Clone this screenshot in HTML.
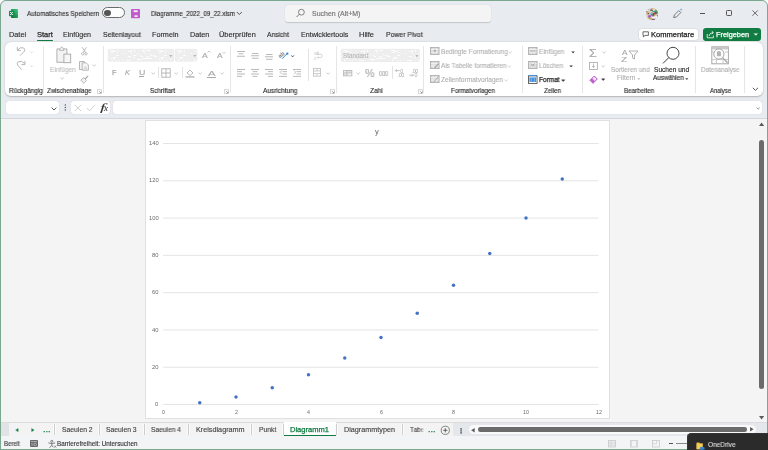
<!DOCTYPE html>
<html><head><meta charset="utf-8">
<style>
*{margin:0;padding:0;box-sizing:border-box}
html,body{width:768px;height:450px;overflow:hidden;background:#fff}
body{position:relative;font-family:"Liberation Sans",sans-serif;color:#242424}
.a{position:absolute}
.tx{white-space:nowrap;line-height:0;font-kerning:none;transform-origin:0 0;-webkit-text-stroke:0.12px currentColor;will-change:transform}
svg.a{overflow:visible}
</style></head><body>
<div class="a" style="left:0px;top:0px;width:768px;height:450px;background:#e8ebef"></div>
<svg class="a" style="left:9px;top:8.8px;" width="10" height="10" viewBox="0 0 10 10"><defs><linearGradient id="xg" x1="1" y1="0" x2="0" y2="1"><stop offset="0" stop-color="#3fd08a"/><stop offset="0.5" stop-color="#1f9a58"/><stop offset="1" stop-color="#0e6f3a"/></linearGradient></defs><rect x="2" y="0" width="7" height="9" rx="0.8" fill="url(#xg)"/><rect x="0" y="1.8" width="5" height="5.4" rx="0.6" fill="#178a4c"/><path d="M1.3 3 L3.7 6 M3.7 3 L1.3 6" stroke="#fff" stroke-width="0.95"/></svg>
<div class="a tx" style="left:26.69px;top:13.70px;font-size:7px;color:#2b2b2b;transform:scaleX(0.9087);">Automatisches Speichern</div>
<div class="a" style="left:102.3px;top:7.3px;width:22.4px;height:11px;border:0.8px solid #6a6a6a;border-radius:6px;background:#fdfdfd"></div>
<div class="a" style="left:104.4px;top:9.6px;width:6.8px;height:6.6px;border-radius:50%;background:#555"></div>
<svg class="a" style="left:131px;top:8.7px;" width="9" height="9.3" viewBox="0 0 9 9.3"><rect x="0" y="0" width="9" height="9.2" rx="0.8" fill="#c35ccb"/><rect x="2.6" y="1.3" width="4.1" height="1.8" fill="#fff" opacity=".9"/><rect x="3.5" y="6.3" width="3.1" height="1.7" fill="#fff" opacity=".9"/></svg>
<div class="a tx" style="left:150.89px;top:13.70px;font-size:7px;color:#2b2b2b;transform:scaleX(0.8802);">Diagramme_2022_09_22.xlsm</div>
<svg class="a" style="left:236px;top:11px;" width="7" height="5" viewBox="0 0 7 5"><path d="M0.8 1 L3.3 3.5 L5.8 1" fill="none" stroke="#444" stroke-width="0.9"/></svg>
<div class="a" style="left:285px;top:5px;width:206px;height:16.7px;background:#f5f4f5;border-radius:3px;box-shadow:0 0.5px 1px rgba(0,0,0,.16)"></div>
<svg class="a" style="left:295px;top:8px;" width="11" height="11" viewBox="0 0 11 11"><circle cx="6.4" cy="4.2" r="2.9" fill="none" stroke="#666" stroke-width="0.8"/><path d="M4.3 6.3 L1.6 9" stroke="#666" stroke-width="0.9"/></svg>
<div class="a tx" style="left:311.58px;top:13.70px;font-size:7px;color:#6e6e6e;">Suchen (Alt+M)</div>
<svg class="a" style="left:645px;top:6.5px;" width="14" height="14" viewBox="0 0 14 14"><defs><clipPath id="avc"><circle cx="7" cy="7.1" r="6.1"/></clipPath></defs><g clip-path="url(#avc)"><rect width="14" height="14" fill="#d8d2c8"/><rect x="5.9" y="7.3" width="2.9" height="1.7" fill="#d9c27a"/><rect x="11.1" y="2.5" width="2.6" height="1.7" fill="#7ac0d8"/><rect x="10.3" y="1.2" width="1.7" height="1.1" fill="#5a5a5a"/><rect x="11.6" y="8.2" width="2.3" height="1.6" fill="#6b4a2a"/><rect x="8.5" y="8.0" width="1.5" height="1.0" fill="#d9c27a"/><rect x="0.8" y="0.5" width="2.8" height="1.8" fill="#5a5a5a"/><rect x="6.0" y="5.7" width="2.7" height="1.7" fill="#b04a5a"/><rect x="3.8" y="0.1" width="1.4" height="1.9" fill="#e8e0d0"/><rect x="13.0" y="12.9" width="2.7" height="2.0" fill="#f2f2f2"/><rect x="9.9" y="6.7" width="1.3" height="1.8" fill="#c9a25a"/><rect x="5.2" y="11.0" width="1.9" height="2.3" fill="#e6e6f0"/><rect x="8.9" y="2.8" width="2.9" height="1.1" fill="#e8e0d0"/><rect x="12.7" y="5.2" width="1.3" height="1.9" fill="#5a5a5a"/><rect x="8.8" y="4.4" width="1.8" height="1.0" fill="#e8e0d0"/><rect x="9.9" y="1.5" width="1.6" height="1.1" fill="#8a6a3a"/><rect x="6.0" y="6.3" width="2.4" height="1.3" fill="#d9c27a"/><rect x="2.5" y="9.5" width="1.4" height="1.9" fill="#c9a25a"/><rect x="5.1" y="12.9" width="1.2" height="2.2" fill="#5a5a5a"/><rect x="7.7" y="13.0" width="1.2" height="1.3" fill="#e6e6f0"/><rect x="7.8" y="7.5" width="1.3" height="1.2" fill="#6b4a2a"/><rect x="3.4" y="10.0" width="1.8" height="1.4" fill="#c9a25a"/><rect x="1.0" y="2.7" width="2.3" height="1.0" fill="#f2f2f2"/><rect x="4.8" y="5.9" width="2.9" height="1.7" fill="#7ac0d8"/><rect x="1.8" y="5.0" width="2.3" height="1.4" fill="#9a4fc0"/><rect x="10.6" y="3.2" width="1.5" height="2.0" fill="#d9c27a"/><rect x="2.6" y="12.4" width="2.8" height="1.8" fill="#e8e0d0"/><rect x="0.6" y="1.4" width="2.1" height="1.4" fill="#ffffff"/><rect x="9.2" y="3.3" width="2.7" height="1.8" fill="#4f9a4a"/><rect x="6.8" y="12.1" width="3.0" height="1.2" fill="#6b4a2a"/><rect x="7.3" y="11.1" width="2.3" height="1.4" fill="#9a4fc0"/><rect x="9.7" y="0.9" width="1.9" height="1.3" fill="#8a6a3a"/><rect x="2.3" y="4.8" width="2.2" height="1.2" fill="#f2f2f2"/><rect x="1.8" y="5.9" width="1.8" height="2.0" fill="#d9c27a"/><rect x="7.6" y="1.8" width="1.3" height="1.0" fill="#f2f2f2"/><rect x="9.1" y="12.5" width="1.2" height="1.9" fill="#6b4a2a"/><rect x="0.9" y="4.0" width="1.4" height="1.1" fill="#6b4a2a"/><rect x="7.1" y="9.6" width="2.8" height="2.0" fill="#ffffff"/><rect x="1.7" y="12.5" width="1.8" height="1.1" fill="#6b4a2a"/><rect x="11.7" y="11.3" width="2.0" height="2.1" fill="#e6e6f0"/><rect x="6.5" y="0.2" width="2.4" height="1.5" fill="#8a6a3a"/><rect x="7.9" y="1.0" width="2.4" height="2.4" fill="#e8e0d0"/><rect x="9.5" y="5.0" width="2.5" height="1.8" fill="#6b4a2a"/><rect x="6.0" y="7.0" width="2.1" height="1.7" fill="#4f9a4a"/><rect x="7.8" y="6.3" width="1.6" height="2.0" fill="#6b4a2a"/><rect x="10.1" y="8.6" width="2.1" height="2.3" fill="#f2f2f2"/><rect x="3.9" y="8.8" width="1.6" height="1.2" fill="#f2f2f2"/><rect x="8.6" y="5.7" width="2.8" height="1.5" fill="#b04a5a"/><rect x="3.3" y="8.2" width="2.6" height="2.1" fill="#9a4fc0"/><rect x="11.4" y="5.0" width="2.2" height="1.4" fill="#3aa6a0"/><rect x="1.7" y="4.6" width="2.8" height="1.1" fill="#c9a25a"/><rect x="12.4" y="3.6" width="1.5" height="1.6" fill="#4f9a4a"/><rect x="12.0" y="10.8" width="1.9" height="1.7" fill="#b04a5a"/><rect x="4.1" y="10.9" width="3.0" height="1.6" fill="#c9a25a"/><rect x="10.8" y="3.6" width="2.3" height="1.9" fill="#4f9a4a"/><rect x="7.4" y="4.0" width="2.6" height="1.0" fill="#3aa6a0"/><rect x="5.3" y="2.5" width="2.6" height="1.4" fill="#5a5a5a"/><rect x="1.8" y="0.6" width="2.3" height="1.6" fill="#b04a5a"/><rect x="7.0" y="8.3" width="1.9" height="1.1" fill="#9a4fc0"/><rect x="2.6" y="6.2" width="1.5" height="1.0" fill="#6b4a2a"/><rect x="7.0" y="0.5" width="1.6" height="2.1" fill="#d9c27a"/></g></svg>
<svg class="a" style="left:672px;top:8px;" width="12" height="12" viewBox="0 0 12 12"><path d="M1.6 9.6 L2.4 7 L6.8 2.6 L8.8 4.6 L4.4 9 Z" fill="none" stroke="#555" stroke-width="0.75"/><path d="M9.2 0.6 V2.6 M8.2 1.6 H10.2" stroke="#4aa0e8" stroke-width="0.6"/></svg>
<div class="a" style="left:700.3px;top:12.6px;width:5.2px;height:0.8px;background:#555"></div>
<div class="a" style="left:725.8px;top:10.4px;width:5.9px;height:5.9px;border:0.8px solid #555;border-radius:1.3px"></div>
<svg class="a" style="left:751.5px;top:10.2px;" width="7" height="7" viewBox="0 0 7 7"><path d="M0.4 0.4 L5.8 5.8 M5.8 0.4 L0.4 5.8" stroke="#444" stroke-width="0.75"/></svg>
<div class="a tx" style="left:8.80px;top:35.20px;font-size:7px;color:#2b2b2b;transform:scaleX(1.0461);">Datei</div>
<div class="a tx" style="left:36.56px;top:35.20px;font-size:7px;color:#2b2b2b;-webkit-text-stroke:0.25px currentColor;transform:scaleX(1.0754);">Start</div>
<div class="a tx" style="left:62.82px;top:35.20px;font-size:7px;color:#2b2b2b;transform:scaleX(1.0148);">Einfügen</div>
<div class="a tx" style="left:102.59px;top:35.20px;font-size:7px;color:#2b2b2b;transform:scaleX(0.9828);">Seitenlayout</div>
<div class="a tx" style="left:152.31px;top:35.20px;font-size:7px;color:#2b2b2b;transform:scaleX(1.0348);">Formeln</div>
<div class="a tx" style="left:189.56px;top:35.20px;font-size:7px;color:#2b2b2b;transform:scaleX(1.0340);">Daten</div>
<div class="a tx" style="left:219.13px;top:35.20px;font-size:7px;color:#2b2b2b;transform:scaleX(1.0492);">Überprüfen</div>
<div class="a tx" style="left:267.39px;top:35.20px;font-size:7px;color:#2b2b2b;transform:scaleX(0.9611);">Ansicht</div>
<div class="a tx" style="left:301.32px;top:35.20px;font-size:7px;color:#2b2b2b;transform:scaleX(1.0141);">Entwicklertools</div>
<div class="a tx" style="left:359.29px;top:35.20px;font-size:7px;color:#2b2b2b;transform:scaleX(1.0672);">Hilfe</div>
<div class="a tx" style="left:385.84px;top:35.20px;font-size:7px;color:#2b2b2b;transform:scaleX(0.9803);">Power Pivot</div>
<div class="a" style="left:37px;top:39.6px;width:16px;height:1.6px;background:#107c41;border-radius:1px"></div>
<div class="a" style="left:638.8px;top:28.6px;width:59.6px;height:11.8px;background:#fff;border-radius:3px;box-shadow:0 0 0 0.6px #d6d6d6"></div>
<svg class="a" style="left:642px;top:31px;" width="8" height="7" viewBox="0 0 8 7"><path d="M1 0.8 H6.4 V4.4 H3 L1.4 5.9 V4.4 H1 Z" fill="none" stroke="#444" stroke-width="0.8"/></svg>
<div class="a tx" style="left:651.08px;top:35.10px;font-size:7px;color:#242424;-webkit-text-stroke:0.25px currentColor;transform:scaleX(1.0794);">Kommentare</div>
<div class="a" style="left:703px;top:27.8px;width:58px;height:13px;background:#107c41;border-radius:3px"></div>
<svg class="a" style="left:706px;top:30px;" width="9" height="9" viewBox="0 0 9 9"><path d="M1.2 4 V7.8 H7.4 V5.5" fill="none" stroke="#fff" stroke-width="0.8"/><path d="M3 6 Q3.5 3 7 2.6 M5.8 1.2 L7.4 2.6 L5.8 4" fill="none" stroke="#fff" stroke-width="0.8"/></svg>
<div class="a tx" style="left:715.80px;top:35.30px;font-size:7px;color:#fff;-webkit-text-stroke:0.25px currentColor;transform:scaleX(1.0495);">Freigeben</div>
<svg class="a" style="left:753px;top:32px;" width="6" height="5" viewBox="0 0 6 5"><path d="M1 1.5 L2.8 3.3 L4.6 1.5" fill="#fff" stroke="#fff" stroke-width="0.6"/></svg>
<div class="a" style="left:5px;top:42.3px;width:758px;height:53.8px;background:#fff;border-radius:6px;box-shadow:0 0.8px 1.6px rgba(0,0,0,.24)"></div>
<div class="a" style="left:43.2px;top:45.5px;width:0.7px;height:47px;background:#e6e6e6"></div>
<div class="a" style="left:103px;top:45.5px;width:0.7px;height:47px;background:#e6e6e6"></div>
<div class="a" style="left:230.3px;top:45.5px;width:0.7px;height:47px;background:#e6e6e6"></div>
<div class="a" style="left:336.2px;top:45.5px;width:0.7px;height:47px;background:#e6e6e6"></div>
<div class="a" style="left:423.4px;top:45.5px;width:0.7px;height:47px;background:#e6e6e6"></div>
<div class="a" style="left:521.5px;top:45.5px;width:0.7px;height:47px;background:#e6e6e6"></div>
<div class="a" style="left:582.3px;top:45.5px;width:0.7px;height:47px;background:#e6e6e6"></div>
<div class="a" style="left:695.3px;top:45.5px;width:0.7px;height:47px;background:#e6e6e6"></div>
<div class="a" style="left:744px;top:45.5px;width:0.7px;height:47px;background:#e6e6e6"></div>
<div class="a" style="left:158px;top:67px;width:0.7px;height:11px;background:#e3e3e3"></div>
<div class="a" style="left:181.5px;top:67px;width:0.7px;height:11px;background:#e3e3e3"></div>
<div class="a" style="left:307.5px;top:48.6px;width:0.7px;height:32.800000000000004px;background:#e3e3e3"></div>
<div class="a" style="left:391.5px;top:66.4px;width:0.7px;height:12.599999999999994px;background:#e3e3e3"></div>
<div class="a tx" style="left:8.94px;top:90.90px;font-size:6.8px;color:#242424;transform:scaleX(0.9431);">Rückgängig</div>
<div class="a tx" style="left:47.20px;top:90.90px;font-size:6.8px;color:#242424;transform:scaleX(0.9049);">Zwischenablage</div>
<div class="a tx" style="left:150.21px;top:91.00px;font-size:6.8px;color:#242424;transform:scaleX(0.9237);">Schriftart</div>
<div class="a tx" style="left:262.69px;top:91.00px;font-size:6.8px;color:#242424;transform:scaleX(0.9575);">Ausrichtung</div>
<div class="a tx" style="left:370.19px;top:91.00px;font-size:6.8px;color:#242424;transform:scaleX(0.9556);">Zahl</div>
<div class="a tx" style="left:450.88px;top:91.00px;font-size:6.8px;color:#242424;transform:scaleX(0.9245);">Formatvorlagen</div>
<div class="a tx" style="left:543.70px;top:91.00px;font-size:6.8px;color:#242424;transform:scaleX(0.9181);">Zellen</div>
<div class="a tx" style="left:623.64px;top:90.80px;font-size:6.8px;color:#242424;transform:scaleX(0.9203);">Bearbeiten</div>
<div class="a tx" style="left:709.79px;top:90.60px;font-size:6.8px;color:#242424;transform:scaleX(0.8712);">Analyse</div>
<svg class="a" style="left:96.5px;top:89px;" width="5" height="5" viewBox="0 0 5 5"><path d="M0.5 0.5 H4.5 V4.5 H0.5 Z" fill="none" stroke="#bcbcbc" stroke-width="0.6"/><path d="M1.8 1.8 L4 4 M4 2.6 V4 H2.6" fill="none" stroke="#8a8a8a" stroke-width="0.6"/></svg>
<svg class="a" style="left:224px;top:89px;" width="5" height="5" viewBox="0 0 5 5"><path d="M0.5 0.5 H4.5 V4.5 H0.5 Z" fill="none" stroke="#bcbcbc" stroke-width="0.6"/><path d="M1.8 1.8 L4 4 M4 2.6 V4 H2.6" fill="none" stroke="#8a8a8a" stroke-width="0.6"/></svg>
<svg class="a" style="left:330px;top:89px;" width="5" height="5" viewBox="0 0 5 5"><path d="M0.5 0.5 H4.5 V4.5 H0.5 Z" fill="none" stroke="#bcbcbc" stroke-width="0.6"/><path d="M1.8 1.8 L4 4 M4 2.6 V4 H2.6" fill="none" stroke="#8a8a8a" stroke-width="0.6"/></svg>
<svg class="a" style="left:417.5px;top:89px;" width="5" height="5" viewBox="0 0 5 5"><path d="M0.5 0.5 H4.5 V4.5 H0.5 Z" fill="none" stroke="#bcbcbc" stroke-width="0.6"/><path d="M1.8 1.8 L4 4 M4 2.6 V4 H2.6" fill="none" stroke="#8a8a8a" stroke-width="0.6"/></svg>
<svg class="a" style="left:752px;top:87px;" width="7" height="5" viewBox="0 0 7 5"><path d="M0.8 0.8 L3.4 3.4 L6 0.8" fill="none" stroke="#444" stroke-width="0.9"/></svg>
<svg class="a" style="left:16px;top:46px;" width="10" height="11" viewBox="0 0 10 11"><path d="M1.3 0.9 V4.4 H4.8" fill="none" stroke="#a8a8a8" stroke-width="0.85"/><path d="M1.6 4.1 Q4.5 0.3 7.8 2 Q9.6 3.3 8.3 5.3 L4 9.6" fill="none" stroke="#a8a8a8" stroke-width="0.85"/></svg>
<svg class="a" style="left:29.8px;top:50.5px;" width="4" height="3" viewBox="0 0 4 3"><path d="M0.4 0.6 L1.6 1.8 L2.8 0.6" fill="none" stroke="#bdbdbd" stroke-width="0.6"/></svg>
<svg class="a" style="left:16px;top:60px;" width="10" height="11" viewBox="0 0 10 11"><path d="M8.9 0.9 V4.6 H5.4" fill="none" stroke="#a8a8a8" stroke-width="0.85"/><path d="M8.6 3.6 Q5.5 0 2.2 1.8 Q0.4 3.2 1.8 5.3 L5.8 9.6" fill="none" stroke="#a8a8a8" stroke-width="0.85"/></svg>
<svg class="a" style="left:29.8px;top:64.5px;" width="4" height="3" viewBox="0 0 4 3"><path d="M0.4 0.6 L1.6 1.8 L2.8 0.6" fill="none" stroke="#bdbdbd" stroke-width="0.6"/></svg>
<svg class="a" style="left:55px;top:46px;" width="17" height="18" viewBox="0 0 17 18"><path d="M1.9 2.9 H4.6 L6.7 1 L8.8 2.9 H11.9 V16.3 H1.9 Z" fill="#f3f3f3" stroke="#a8a8a8" stroke-width="0.9" stroke-linejoin="round"/><path d="M4.6 2.9 V4.4 H8.8 V2.9" fill="none" stroke="#a8a8a8" stroke-width="0.8"/><rect x="8.9" y="8.1" width="6.8" height="8.6" fill="#f6f6f6" stroke="#a8a8a8" stroke-width="0.9"/></svg>
<div class="a tx" style="left:49.66px;top:70.40px;font-size:6.8px;color:#b8b8b8;transform:scaleX(0.9634);-webkit-text-stroke:0.05px #b8b8b8">Einfügen</div>
<svg class="a" style="left:59.5px;top:76.8px;" width="5" height="3.5" viewBox="0 0 5 3.5"><path d="M0.6 0.6 L2.2 2.2 L3.8 0.6" fill="none" stroke="#b0b0b0" stroke-width="0.7"/></svg>
<svg class="a" style="left:80.5px;top:47px;" width="7" height="9" viewBox="0 0 7 9"><path d="M1.3 0.3 L4.6 5.6 M5.4 0.3 L2.1 5.6" stroke="#a8a8a8" stroke-width="0.8"/><circle cx="1.7" cy="6.8" r="1.2" fill="none" stroke="#a8a8a8" stroke-width="0.7"/><circle cx="5" cy="6.8" r="1.2" fill="none" stroke="#a8a8a8" stroke-width="0.7"/></svg>
<svg class="a" style="left:79px;top:60.5px;" width="11" height="10" viewBox="0 0 11 10"><rect x="0.6" y="0.6" width="4.6" height="8" fill="#f3f3f3" stroke="#a8a8a8" stroke-width="0.8"/><path d="M3.2 1.8 H7.2 L9.4 4 V9.2 H3.2 Z" fill="#f6f6f6" stroke="#a8a8a8" stroke-width="0.8"/><path d="M5 6 H7.8 M5 7.6 H7.8" stroke="#a8a8a8" stroke-width="0.5"/></svg>
<svg class="a" style="left:92.2px;top:64.3px;" width="5" height="3.5" viewBox="0 0 5 3.5"><path d="M0.6 0.6 L2.2 2.2 L3.8 0.6" fill="none" stroke="#b0b0b0" stroke-width="0.7"/></svg>
<svg class="a" style="left:80px;top:74.5px;" width="9" height="9" viewBox="0 0 9 9"><path d="M0.8 5 L3.8 2.6 L6.4 5.6 L3.6 8.2 Z" fill="#f3f3f3" stroke="#a8a8a8" stroke-width="0.8" stroke-linejoin="round"/><path d="M5 4 L8.2 0.8" stroke="#a8a8a8" stroke-width="1.1"/></svg>
<svg class="a" style="left:0px;top:0px;width:0;height:0" width="1" height="1" viewBox="0 0 1 1"><defs><pattern id="spk" width="48" height="12" patternUnits="userSpaceOnUse"><rect width="48" height="12" fill="#eeeeee"/><rect x="20" y="2" width="3" height="1" fill="#fcfcfc"/><rect x="41" y="0" width="1" height="1" fill="#fcfcfc"/><rect x="34" y="1" width="2" height="1" fill="#fcfcfc"/><rect x="37" y="0" width="1" height="1" fill="#fcfcfc"/><rect x="2" y="1" width="3" height="1" fill="#fcfcfc"/><rect x="26" y="1" width="1" height="1" fill="#fcfcfc"/><rect x="5" y="8" width="3" height="1" fill="#fcfcfc"/><rect x="3" y="9" width="1" height="1" fill="#fcfcfc"/><rect x="14" y="10" width="1" height="1" fill="#fcfcfc"/><rect x="36" y="9" width="3" height="1" fill="#fcfcfc"/><rect x="3" y="3" width="1" height="1" fill="#fcfcfc"/><rect x="35" y="2" width="2" height="1" fill="#fcfcfc"/><rect x="26" y="2" width="1" height="1" fill="#fcfcfc"/><rect x="36" y="4" width="1" height="1" fill="#fcfcfc"/><rect x="6" y="9" width="1" height="1" fill="#fcfcfc"/><rect x="23" y="1" width="1" height="1" fill="#fcfcfc"/><rect x="36" y="0" width="1" height="1" fill="#fcfcfc"/><rect x="31" y="10" width="3" height="1" fill="#fcfcfc"/><rect x="20" y="7" width="3" height="1" fill="#fcfcfc"/><rect x="23" y="4" width="1" height="1" fill="#fcfcfc"/><rect x="11" y="11" width="1" height="1" fill="#fcfcfc"/><rect x="5" y="9" width="2" height="1" fill="#fcfcfc"/><rect x="33" y="7" width="2" height="1" fill="#fcfcfc"/><rect x="46" y="7" width="2" height="1" fill="#fcfcfc"/><rect x="38" y="1" width="1" height="1" fill="#fcfcfc"/><rect x="32" y="6" width="1" height="1" fill="#fcfcfc"/><rect x="21" y="2" width="3" height="1" fill="#fcfcfc"/><rect x="26" y="0" width="1" height="1" fill="#fcfcfc"/><rect x="35" y="9" width="2" height="1" fill="#fcfcfc"/><rect x="21" y="11" width="2" height="1" fill="#fcfcfc"/><rect x="38" y="7" width="3" height="1" fill="#fcfcfc"/><rect x="4" y="1" width="2" height="1" fill="#fcfcfc"/><rect x="30" y="11" width="1" height="1" fill="#fcfcfc"/><rect x="3" y="11" width="2" height="1" fill="#fcfcfc"/><rect x="41" y="9" width="3" height="1" fill="#fcfcfc"/><rect x="18" y="11" width="3" height="1" fill="#fcfcfc"/><rect x="42" y="5" width="1" height="1" fill="#fcfcfc"/><rect x="29" y="5" width="1" height="1" fill="#fcfcfc"/><rect x="39" y="1" width="3" height="1" fill="#fcfcfc"/><rect x="3" y="3" width="2" height="1" fill="#fcfcfc"/><rect x="8" y="11" width="1" height="1" fill="#fcfcfc"/><rect x="25" y="6" width="3" height="1" fill="#fcfcfc"/><rect x="5" y="2" width="3" height="1" fill="#fcfcfc"/><rect x="25" y="8" width="2" height="1" fill="#fcfcfc"/><rect x="8" y="6" width="2" height="1" fill="#fcfcfc"/><rect x="45" y="6" width="2" height="1" fill="#fcfcfc"/><rect x="43" y="6" width="1" height="1" fill="#fcfcfc"/><rect x="9" y="1" width="1" height="1" fill="#fcfcfc"/><rect x="9" y="3" width="1" height="1" fill="#fcfcfc"/><rect x="0" y="7" width="1" height="1" fill="#fcfcfc"/><rect x="16" y="4" width="1" height="1" fill="#fcfcfc"/><rect x="9" y="6" width="2" height="1" fill="#fcfcfc"/><rect x="39" y="9" width="2" height="1" fill="#fcfcfc"/><rect x="8" y="11" width="1" height="1" fill="#fcfcfc"/><rect x="29" y="10" width="3" height="1" fill="#fcfcfc"/></pattern></defs></svg>
<svg class="a" style="left:107.5px;top:48.7px;" width="66" height="12.5" viewBox="0 0 66 12.5"><rect x="0.3" y="0.3" width="65.4" height="11.9" rx="1.2" fill="url(#spk)" stroke="#e6e6e6" stroke-width="0.6"/></svg>
<svg class="a" style="left:175.3px;top:48.7px;" width="22.2" height="12.5" viewBox="0 0 22.2 12.5"><rect x="0.3" y="0.3" width="21.599999999999998" height="11.9" rx="1.2" fill="url(#spk)" stroke="#e6e6e6" stroke-width="0.6"/></svg>
<svg class="a" style="left:168.6px;top:54.6px;" width="4" height="3" viewBox="0 0 4 3"><path d="M0.2 0.3 L1.8 2 L3.4 0.3 Z" fill="#a6a6a6"/></svg>
<svg class="a" style="left:192.6px;top:54.6px;" width="4" height="3" viewBox="0 0 4 3"><path d="M0.2 0.3 L1.8 2 L3.4 0.3 Z" fill="#a6a6a6"/></svg>
<div class="a tx" style="left:202.18px;top:56.00px;font-size:7.5px;color:#a8a8a8;transform:scaleX(1.1462);">A</div>
<div class="a tx" style="left:217.38px;top:56.00px;font-size:6.3px;color:#a8a8a8;transform:scaleX(1.3166);">A</div>
<svg class="a" style="left:207px;top:50px;" width="4" height="3" viewBox="0 0 4 3"><path d="M0.5 2.5 L2 1 L3.5 2.5" fill="none" stroke="#a8a8a8" stroke-width="0.6"/></svg>
<svg class="a" style="left:221.5px;top:50.5px;" width="4" height="3" viewBox="0 0 4 3"><path d="M0.5 1 L2 2.5 L3.5 1" fill="none" stroke="#a8a8a8" stroke-width="0.6"/></svg>
<div class="a tx" style="left:112.20px;top:72.80px;font-size:7px;color:#a8a8a8;-webkit-text-stroke:0.25px currentColor;transform:scaleX(1.0522);">F</div>
<div class="a tx" style="left:125.49px;top:72.80px;font-size:7px;color:#a8a8a8;transform:scaleX(1.0707);font-style:italic">K</div>
<div class="a tx" style="left:139.02px;top:72.80px;font-size:7px;color:#a8a8a8;transform:scaleX(1.2578);">U</div>
<div class="a" style="left:139.3px;top:76px;width:5px;height:0.7px;background:#a8a8a8"></div>
<svg class="a" style="left:150.5px;top:71.5px;" width="5" height="3.5" viewBox="0 0 5 3.5"><path d="M0.6 0.6 L2.2 2.2 L3.8 0.6" fill="none" stroke="#b0b0b0" stroke-width="0.7"/></svg>
<svg class="a" style="left:160.5px;top:67.5px;" width="10" height="10" viewBox="0 0 10 10"><rect x="0.8" y="0.8" width="8.4" height="8.4" fill="none" stroke="#a8a8a8" stroke-width="0.8"/><path d="M5 0.8 V9.2 M0.8 5 H9.2" stroke="#a8a8a8" stroke-width="0.8"/></svg>
<svg class="a" style="left:173.5px;top:71.5px;" width="5" height="3.5" viewBox="0 0 5 3.5"><path d="M0.6 0.6 L2.2 2.2 L3.8 0.6" fill="none" stroke="#b0b0b0" stroke-width="0.7"/></svg>
<svg class="a" style="left:184.5px;top:67.5px;" width="10" height="10" viewBox="0 0 10 10"><path d="M2 5 L5 2 L8 5 L5 7.5 Z" fill="none" stroke="#a8a8a8" stroke-width="0.8"/><rect x="0.5" y="8.3" width="9" height="1.2" fill="#a8a8a8"/></svg>
<svg class="a" style="left:197.5px;top:71.5px;" width="5" height="3.5" viewBox="0 0 5 3.5"><path d="M0.6 0.6 L2.2 2.2 L3.8 0.6" fill="none" stroke="#b0b0b0" stroke-width="0.7"/></svg>
<div class="a tx" style="left:207.88px;top:73.50px;font-size:7px;color:#a8a8a8;transform:scaleX(1.6158);">A</div>
<div class="a" style="left:206.5px;top:77px;width:9.5px;height:1.2px;background:#a8a8a8"></div>
<svg class="a" style="left:219.5px;top:71.5px;" width="5" height="3.5" viewBox="0 0 5 3.5"><path d="M0.6 0.6 L2.2 2.2 L3.8 0.6" fill="none" stroke="#b0b0b0" stroke-width="0.7"/></svg>
<svg class="a" style="left:237px;top:51px;" width="10" height="10" viewBox="0 0 10 10"><rect x="0" y="0.0" width="8" height="0.8" fill="#a8a8a8"/><rect x="1.5" y="2.4" width="5" height="0.8" fill="#a8a8a8"/><rect x="0" y="4.8" width="8" height="0.8" fill="#a8a8a8"/></svg>
<svg class="a" style="left:251.3px;top:52.5px;" width="10" height="10" viewBox="0 0 10 10"><rect x="1" y="0.0" width="6.5" height="0.8" fill="#a8a8a8"/><rect x="0" y="2.4" width="8" height="0.8" fill="#a8a8a8"/><rect x="1" y="4.8" width="6.5" height="0.8" fill="#a8a8a8"/></svg>
<svg class="a" style="left:265.2px;top:54px;" width="10" height="10" viewBox="0 0 10 10"><rect x="1" y="0.0" width="6.5" height="0.8" fill="#a8a8a8"/><rect x="0" y="2.4" width="8" height="0.8" fill="#a8a8a8"/><rect x="1" y="4.8" width="6.5" height="0.8" fill="#a8a8a8"/></svg>
<svg class="a" style="left:278px;top:50px;" width="12" height="10" viewBox="0 0 12 10"><text x="0" y="6.5" transform="rotate(-40 3.5 4.5)" font-family="Liberation Sans" font-weight="bold" font-size="5.6" fill="#7a7a7a">ab</text><path d="M4 8.8 L8.9 3.9" stroke="#2f86d4" stroke-width="1"/><rect x="8.3" y="2.6" width="2" height="2" fill="#2f86d4"/></svg>
<svg class="a" style="left:290.6px;top:54.6px;" width="4" height="3" viewBox="0 0 4 3"><path d="M0.3 0.4 L1.6 1.9 L2.9 0.4" fill="none" stroke="#333" stroke-width="0.8"/></svg>
<svg class="a" style="left:237px;top:68.5px;" width="10" height="10" viewBox="0 0 10 10"><rect x="0" y="0.0" width="8" height="0.8" fill="#a8a8a8"/><rect x="0" y="2.3" width="5" height="0.8" fill="#a8a8a8"/><rect x="0" y="4.6" width="8" height="0.8" fill="#a8a8a8"/><rect x="0" y="6.8999999999999995" width="5" height="0.8" fill="#a8a8a8"/></svg>
<svg class="a" style="left:251.3px;top:68.5px;" width="10" height="10" viewBox="0 0 10 10"><rect x="0" y="0.0" width="8" height="0.8" fill="#a8a8a8"/><rect x="1.5" y="2.3" width="5" height="0.8" fill="#a8a8a8"/><rect x="0" y="4.6" width="8" height="0.8" fill="#a8a8a8"/><rect x="1.5" y="6.8999999999999995" width="5" height="0.8" fill="#a8a8a8"/></svg>
<svg class="a" style="left:265.2px;top:68.5px;" width="10" height="10" viewBox="0 0 10 10"><rect x="0" y="0.0" width="8" height="0.8" fill="#a8a8a8"/><rect x="3" y="2.3" width="5" height="0.8" fill="#a8a8a8"/><rect x="0" y="4.6" width="8" height="0.8" fill="#a8a8a8"/><rect x="3" y="6.8999999999999995" width="5" height="0.8" fill="#a8a8a8"/></svg>
<svg class="a" style="left:279px;top:68.5px;" width="10" height="10" viewBox="0 0 10 10"><rect x="0" y="0.0" width="8" height="0.8" fill="#a8a8a8"/><rect x="3.5" y="2.3" width="4.5" height="0.8" fill="#a8a8a8"/><rect x="3.5" y="4.6" width="4.5" height="0.8" fill="#a8a8a8"/><rect x="0" y="6.8999999999999995" width="8" height="0.8" fill="#a8a8a8"/></svg>
<svg class="a" style="left:293px;top:68.5px;" width="10" height="10" viewBox="0 0 10 10"><rect x="0" y="0.0" width="8" height="0.8" fill="#a8a8a8"/><rect x="3.5" y="2.3" width="4.5" height="0.8" fill="#a8a8a8"/><rect x="3.5" y="4.6" width="4.5" height="0.8" fill="#a8a8a8"/><rect x="0" y="6.8999999999999995" width="8" height="0.8" fill="#a8a8a8"/></svg>
<svg class="a" style="left:279px;top:70px;" width="4" height="5" viewBox="0 0 4 5"><path d="M3 0.5 L0.8 2.3 L3 4" fill="none" stroke="#a8a8a8" stroke-width="0.6"/></svg>
<svg class="a" style="left:293px;top:70px;" width="4" height="5" viewBox="0 0 4 5"><path d="M0.8 0.5 L3 2.3 L0.8 4" fill="none" stroke="#a8a8a8" stroke-width="0.6"/></svg>
<svg class="a" style="left:313.5px;top:51px;" width="10" height="10" viewBox="0 0 10 10"><text x="0.3" y="4.2" font-family="Liberation Sans" font-size="4.6" fill="#c4c4c4">ab</text><text x="0.3" y="8.8" font-family="Liberation Sans" font-size="4.6" fill="#c4c4c4">c</text><path d="M4 6.5 H6.6 A1.6 1.6 0 0 0 6.6 3.3 H3 M4.2 5.4 L3.2 6.5 L4.2 7.6" fill="none" stroke="#b8b8b8" stroke-width="0.6"/></svg>
<svg class="a" style="left:312.9px;top:68px;" width="8.5" height="9" viewBox="0 0 8.5 9"><rect x="0" y="0" width="8" height="8.6" fill="#c6c6c6"/><rect x="0.9" y="0.9" width="2.7" height="1.6" fill="#fff"/><rect x="4.4" y="0.9" width="2.7" height="1.6" fill="#fff"/><rect x="0.9" y="3.4" width="6.2" height="1.8" fill="#fff"/><rect x="0.9" y="6.1" width="2.7" height="1.6" fill="#fff"/><rect x="4.4" y="6.1" width="2.7" height="1.6" fill="#fff"/></svg>
<svg class="a" style="left:325.6px;top:71.8px;" width="5" height="3.5" viewBox="0 0 5 3.5"><path d="M0.6 0.6 L2.2 2.2 L3.8 0.6" fill="none" stroke="#b0b0b0" stroke-width="0.7"/></svg>
<svg class="a" style="left:340.9px;top:48.9px;" width="78.7" height="12.8" viewBox="0 0 78.7 12.8"><rect x="0.3" y="0.3" width="78.10000000000001" height="12.200000000000001" rx="1.2" fill="url(#spk)" stroke="#e6e6e6" stroke-width="0.6"/></svg>
<div class="a tx" style="left:342.86px;top:56.00px;font-size:6.3px;color:#b8b8b8;">Standard</div>
<svg class="a" style="left:414.5px;top:54.8px;" width="4" height="3" viewBox="0 0 4 3"><path d="M0.2 0.3 L1.8 2 L3.4 0.3 Z" fill="#a6a6a6"/></svg>
<svg class="a" style="left:342.9px;top:69.8px;" width="9.5" height="6.5" viewBox="0 0 9.5 6.5"><rect x="0" y="0" width="9.3" height="6.3" fill="#bcbcbc"/><rect x="0.9" y="0.9" width="2.2" height="1.6" fill="#f2f2f2"/><rect x="3.8" y="0.9" width="4.6" height="1.6" fill="#e0e0e0"/><rect x="4.6" y="3.3" width="3.8" height="2.2" fill="#f2f2f2"/><rect x="0.9" y="3.3" width="2.8" height="2.2" fill="#e0e0e0"/></svg>
<svg class="a" style="left:355.5px;top:71.5px;" width="5" height="3.5" viewBox="0 0 5 3.5"><path d="M0.6 0.6 L2.2 2.2 L3.8 0.6" fill="none" stroke="#b0b0b0" stroke-width="0.7"/></svg>
<div class="a tx" style="left:364.82px;top:73.30px;font-size:11.5px;color:#a8a8a8;transform:scaleX(0.9356);">%</div>
<div class="a tx" style="left:379.18px;top:73.60px;font-size:6.6px;color:#a8a8a8;transform:scaleX(0.8384);">000</div>
<svg class="a" style="left:394.5px;top:68px;" width="10" height="10" viewBox="0 0 10 10"><path d="M0.4 2.6 H4.6 M1.8 1.2 L0.4 2.6 L1.8 4" fill="none" stroke="#a8a8a8" stroke-width="0.7"/><text x="5.2" y="4.6" font-family="Liberation Sans" font-size="5.4" fill="#a8a8a8">0</text><text x="2.6" y="9.2" font-family="Liberation Sans" font-size="5.4" fill="#a8a8a8" letter-spacing="-0.4">.00</text></svg>
<svg class="a" style="left:408.7px;top:68px;" width="10" height="10" viewBox="0 0 10 10"><text x="2.6" y="4.6" font-family="Liberation Sans" font-size="5.4" fill="#a8a8a8" letter-spacing="-0.4">.00</text><path d="M0.2 7.2 H4.4 M3 5.8 L4.4 7.2 L3 8.6" fill="none" stroke="#a8a8a8" stroke-width="0.7"/><text x="5.4" y="9.2" font-family="Liberation Sans" font-size="5.4" fill="#a8a8a8">0</text></svg>
<svg class="a" style="left:430px;top:47.3px;" width="9.5" height="8" viewBox="0 0 9.5 8"><rect x="0.45" y="0.45" width="8.6" height="7.1" fill="#d6d6d6" stroke="#b0b0b0" stroke-width="0.9"/><path d="M0.9 2.6 H8.6 M0.9 5 H8.6 M3.2 0.9 V7.1 M6.2 0.9 V7.1" stroke="#f7f7f7" stroke-width="0.75"/><rect x="3.6" y="2.9" width="2.3" height="1.8" fill="#a9a9a9"/></svg>
<svg class="a" style="left:430px;top:61px;" width="9.5" height="8" viewBox="0 0 9.5 8"><rect x="0.45" y="0.45" width="8.6" height="7.1" fill="#d6d6d6" stroke="#b0b0b0" stroke-width="0.9"/><path d="M0.9 2.6 H8.6 M0.9 5 H8.6 M3.2 0.9 V7.1 M6.2 0.9 V7.1" stroke="#f7f7f7" stroke-width="0.75"/><path d="M4.5 7.2 L8.4 2.6" stroke="#a0a0a0" stroke-width="1.1"/></svg>
<svg class="a" style="left:430px;top:74.8px;" width="9.5" height="8" viewBox="0 0 9.5 8"><rect x="0.45" y="0.45" width="8.6" height="7.1" fill="#d6d6d6" stroke="#b0b0b0" stroke-width="0.9"/><path d="M0.9 2.6 H8.6 M0.9 5 H8.6 M3.2 0.9 V7.1 M6.2 0.9 V7.1" stroke="#f7f7f7" stroke-width="0.75"/><path d="M3.6 7 L8.6 1.6" stroke="#a0a0a0" stroke-width="0.9"/></svg>
<div class="a tx" style="left:440.86px;top:51.80px;font-size:6.6px;color:#b0b0b0;transform:scaleX(0.9944);">Bedingte Formatierung</div>
<svg class="a" style="left:508px;top:50.5px;" width="5" height="3.5" viewBox="0 0 5 3.5"><path d="M0.6 0.6 L2.2 2.2 L3.8 0.6" fill="none" stroke="#c0c0c0" stroke-width="0.7"/></svg>
<div class="a tx" style="left:441.39px;top:65.60px;font-size:6.6px;color:#b0b0b0;transform:scaleX(0.9626);">Als Tabelle formatieren</div>
<svg class="a" style="left:507px;top:64.5px;" width="5" height="3.5" viewBox="0 0 5 3.5"><path d="M0.6 0.6 L2.2 2.2 L3.8 0.6" fill="none" stroke="#c0c0c0" stroke-width="0.7"/></svg>
<div class="a tx" style="left:441.19px;top:79.60px;font-size:6.6px;color:#b0b0b0;">Zellenformatvorlagen</div>
<svg class="a" style="left:504px;top:78.5px;" width="5" height="3.5" viewBox="0 0 5 3.5"><path d="M0.6 0.6 L2.2 2.2 L3.8 0.6" fill="none" stroke="#c0c0c0" stroke-width="0.7"/></svg>
<svg class="a" style="left:528.2px;top:47.3px;" width="9.5" height="8" viewBox="0 0 9.5 8"><rect x="0.45" y="0.45" width="8.6" height="7.1" fill="#d6d6d6" stroke="#b0b0b0" stroke-width="0.9"/><path d="M0.9 2.6 H8.6 M0.9 5 H8.6 M3.2 0.9 V7.1 M6.2 0.9 V7.1" stroke="#f7f7f7" stroke-width="0.75"/><rect x="2" y="3.2" width="5.5" height="1.4" fill="#bdbdbd"/></svg>
<svg class="a" style="left:528.2px;top:61px;" width="9.5" height="8" viewBox="0 0 9.5 8"><rect x="0.45" y="0.45" width="8.6" height="7.1" fill="#d6d6d6" stroke="#b0b0b0" stroke-width="0.9"/><path d="M0.9 2.6 H8.6 M0.9 5 H8.6 M3.2 0.9 V7.1 M6.2 0.9 V7.1" stroke="#f7f7f7" stroke-width="0.75"/><path d="M2.5 2.6 L7 5.4 M7 2.6 L2.5 5.4" stroke="#a9a9a9" stroke-width="0.8"/></svg>
<svg class="a" style="left:528.2px;top:74.8px;" width="9.5" height="9" viewBox="0 0 9.5 9"><rect x="0.45" y="0.9" width="8.6" height="7.6" fill="#fff" stroke="#555" stroke-width="0.9"/><rect x="1.4" y="2.4" width="6.7" height="4.6" fill="#3d8fe0"/><path d="M0.5 0.45 H9" stroke="#3d8fe0" stroke-width="0.9"/><path d="M3.2 2.4 V7 M6.3 2.4 V7" stroke="#cfe3f7" stroke-width="0.5"/></svg>
<div class="a tx" style="left:539.37px;top:51.80px;font-size:6.6px;color:#b0b0b0;transform:scaleX(0.9727);">Einfügen</div>
<svg class="a" style="left:570.8px;top:50.8px;" width="5" height="4" viewBox="0 0 5 4"><path d="M0.3 0.4 L2.1 2.3 L3.9 0.4 Z" fill="#333"/></svg>
<div class="a tx" style="left:539.37px;top:65.60px;font-size:6.6px;color:#b0b0b0;transform:scaleX(0.9715);">Löschen</div>
<svg class="a" style="left:569.3px;top:64.8px;" width="5" height="4" viewBox="0 0 5 4"><path d="M0.3 0.4 L2.1 2.3 L3.9 0.4 Z" fill="#333"/></svg>
<div class="a tx" style="left:539.37px;top:79.60px;font-size:6.6px;color:#242424;-webkit-text-stroke:0.25px currentColor;transform:scaleX(0.9797);">Format</div>
<svg class="a" style="left:561px;top:78.5px;" width="5" height="3.5" viewBox="0 0 5 3.5"><path d="M0.5 0.8 L2.2 2.6 L3.9 0.8 Z" fill="#333" stroke="#333" stroke-width="0.4"/></svg>
<div class="a tx" style="left:589.43px;top:52.80px;font-size:11px;color:#a8a8a8;transform:scaleX(1.1582);">Σ</div>
<svg class="a" style="left:601.5px;top:50.5px;" width="5" height="3.5" viewBox="0 0 5 3.5"><path d="M0.6 0.6 L2.2 2.2 L3.8 0.6" fill="none" stroke="#b0b0b0" stroke-width="0.7"/></svg>
<svg class="a" style="left:588.5px;top:61.5px;" width="9" height="8" viewBox="0 0 9 8"><rect x="0.5" y="0.5" width="8" height="7" fill="none" stroke="#a8a8a8" stroke-width="0.8"/><path d="M4.5 1.5 V5.5 M3 4 L4.5 5.5 L6 4" fill="none" stroke="#a8a8a8" stroke-width="0.7"/></svg>
<svg class="a" style="left:600.5px;top:64.5px;" width="5" height="3.5" viewBox="0 0 5 3.5"><path d="M0.6 0.6 L2.2 2.2 L3.8 0.6" fill="none" stroke="#b0b0b0" stroke-width="0.7"/></svg>
<svg class="a" style="left:588.5px;top:74.5px;" width="9" height="9" viewBox="0 0 9 9"><path d="M1 5.3 L5.3 1 L8.3 4 L4 8.3 Z" fill="#f3e3f5" stroke="#b146c2" stroke-width="0.95" stroke-linejoin="round"/><path d="M1 5.3 L3 3.3 L6 6.3 L4 8.3 Z" fill="#c061cf"/></svg>
<svg class="a" style="left:600.5px;top:78px;" width="5" height="3.5" viewBox="0 0 5 3.5"><path d="M0.5 0.8 L2.2 2.6 L3.9 0.8 Z" fill="#333" stroke="#333" stroke-width="0.4"/></svg>
<div class="a tx" style="left:621.78px;top:53.30px;font-size:6.8px;color:#a8a8a8;transform:scaleX(1.2198);">A</div>
<div class="a tx" style="left:621.48px;top:60.30px;font-size:6.8px;color:#a8a8a8;transform:scaleX(1.4764);">Z</div>
<svg class="a" style="left:627.5px;top:50px;" width="11" height="10" viewBox="0 0 11 10"><path d="M1 1 H10 L6.5 5 V9 L4.5 8 V5 Z" fill="none" stroke="#a8a8a8" stroke-width="0.9"/></svg>
<div class="a tx" style="left:610.61px;top:69.70px;font-size:6.5px;color:#b0b0b0;transform:scaleX(0.9893);">Sortieren und</div>
<div class="a tx" style="left:617.35px;top:78.00px;font-size:6.5px;color:#b0b0b0;transform:scaleX(1.0232);">Filtern</div>
<svg class="a" style="left:637px;top:77.6px;" width="4" height="3" viewBox="0 0 4 3"><path d="M0.2 0.3 L1.8 2 L3.4 0.3 Z" fill="#b8b8b8"/></svg>
<svg class="a" style="left:661px;top:46px;" width="20" height="19" viewBox="0 0 20 19"><circle cx="12" cy="7.3" r="6" fill="none" stroke="#333" stroke-width="0.9"/><path d="M7.8 11.6 L2 17.4" stroke="#333" stroke-width="1"/></svg>
<div class="a tx" style="left:653.50px;top:69.70px;font-size:6.5px;color:#242424;transform:scaleX(1.0123);">Suchen und</div>
<div class="a tx" style="left:652.59px;top:78.00px;font-size:6.5px;color:#242424;transform:scaleX(0.9693);">Auswählen</div>
<svg class="a" style="left:685px;top:77.6px;" width="4" height="3" viewBox="0 0 4 3"><path d="M0.2 0.3 L1.8 2 L3.4 0.3 Z" fill="#444"/></svg>
<svg class="a" style="left:710.5px;top:45.5px;" width="18.5" height="18.5" viewBox="0 0 18.5 18.5"><rect x="0.8" y="0.8" width="16.6" height="17" fill="#fff" stroke="#a9a9a9" stroke-width="1"/><rect x="0.8" y="0.8" width="16.6" height="2.6" fill="#c9c9c9"/><path d="M0.8 13.6 H17.4 M5.5 13.6 V17.8 M12 13.6 V17.8 M0.8 6 H3 M14 6 H17.4" stroke="#bdbdbd" stroke-width="0.8"/><circle cx="7.9" cy="8" r="5.1" fill="#fff" stroke="#a9a9a9" stroke-width="1"/><path d="M5.9 10.2 V6 Q7.9 4 9.9 6 V10.2 Z" fill="#b3b3b3"/><path d="M11.6 11.7 L16.6 16.7" stroke="#a9a9a9" stroke-width="1.3"/></svg>
<div class="a tx" style="left:700.59px;top:69.60px;font-size:6.5px;color:#b0b0b0;transform:scaleX(0.9633);">Datenanalyse</div>
<div class="a" style="left:6px;top:101px;width:53px;height:13px;background:#fff;border-radius:2.2px;box-shadow:0 0 0.8px rgba(0,0,0,.3)"></div>
<svg class="a" style="left:50.5px;top:106.5px;" width="7" height="4" viewBox="0 0 7 4"><path d="M0.6 0.6 L3 3 L5.4 0.6" fill="none" stroke="#444" stroke-width="0.9"/></svg>
<svg class="a" style="left:64px;top:104px;" width="3" height="8" viewBox="0 0 3 8"><circle cx="1.3" cy="1" r="0.7" fill="#555"/><circle cx="1.3" cy="3.5" r="0.7" fill="#555"/><circle cx="1.3" cy="6" r="0.7" fill="#555"/></svg>
<div class="a" style="left:71px;top:101px;width:39px;height:13px;background:#fff;border-radius:2.2px;box-shadow:0 0 0.8px rgba(0,0,0,.3)"></div>
<svg class="a" style="left:73.5px;top:103.5px;" width="8" height="8" viewBox="0 0 8 8"><path d="M0.8 0.8 L7 7 M7 0.8 L0.8 7" stroke="#bdbdbd" stroke-width="0.7"/></svg>
<svg class="a" style="left:85.5px;top:103.5px;" width="10" height="8" viewBox="0 0 10 8"><path d="M0.8 4 L3.5 6.8 L9 0.8" fill="none" stroke="#bdbdbd" stroke-width="0.7"/></svg>
<div class="a tx" style="left:99.73px;top:108.30px;font-size:9.5px;color:#333;transform:scaleX(1.9851);font-family:'Liberation Serif';font-style:italic;-webkit-text-stroke:0.05px #333">f</div>
<div class="a tx" style="left:103.90px;top:108.80px;font-size:7.5px;color:#333;transform:scaleX(1.1715);font-family:'Liberation Serif';font-style:italic;-webkit-text-stroke:0.1px #333">x</div>
<div class="a" style="left:113px;top:101px;width:649px;height:13px;background:#fff;border-radius:2.2px;box-shadow:0 0 0.8px rgba(0,0,0,.3)"></div>
<svg class="a" style="left:755.5px;top:106.5px;" width="5" height="3.5" viewBox="0 0 5 3.5"><path d="M0.6 0.6 L2.2 2.2 L3.8 0.6" fill="none" stroke="#666" stroke-width="0.7"/></svg>
<div class="a" style="left:1px;top:117.6px;width:766px;height:1.2px;background:#d3d6da"></div>
<div class="a" style="left:1px;top:118.8px;width:766px;height:303.5px;background:#f4f4f4"></div>
<div class="a" style="left:145px;top:119.7px;width:464.5px;height:299.2px;background:#fff;border:0.7px solid #e0e0e0"></div>
<div class="a tx" style="left:375.22px;top:131.50px;font-size:7.5px;color:#6a6a6a;-webkit-text-stroke:0.05px #6a6a6a">y</div>
<svg class="a" style="left:145px;top:120px;" width="465" height="300" viewBox="0 0 465 300"><rect x="18" y="284.000" width="435.5" height="1" fill="#e5e5e5"/><rect x="18" y="246.714" width="435.5" height="1" fill="#e5e5e5"/><rect x="18" y="209.429" width="435.5" height="1" fill="#e5e5e5"/><rect x="18" y="172.143" width="435.5" height="1" fill="#e5e5e5"/><rect x="18" y="134.857" width="435.5" height="1" fill="#e5e5e5"/><rect x="18" y="97.571" width="435.5" height="1" fill="#e5e5e5"/><rect x="18" y="60.286" width="435.5" height="1" fill="#e5e5e5"/><rect x="18" y="23.000" width="435.5" height="1" fill="#e5e5e5"/><circle cx="54.75" cy="282.64" r="1.75" fill="#4472c4"/><circle cx="91.00" cy="277.04" r="1.75" fill="#4472c4"/><circle cx="127.25" cy="267.72" r="1.75" fill="#4472c4"/><circle cx="163.50" cy="254.67" r="1.75" fill="#4472c4"/><circle cx="199.75" cy="237.89" r="1.75" fill="#4472c4"/><circle cx="236.00" cy="217.39" r="1.75" fill="#4472c4"/><circle cx="272.25" cy="193.15" r="1.75" fill="#4472c4"/><circle cx="308.50" cy="165.19" r="1.75" fill="#4472c4"/><circle cx="344.75" cy="133.49" r="1.75" fill="#4472c4"/><circle cx="381.00" cy="98.07" r="1.75" fill="#4472c4"/><circle cx="417.25" cy="58.92" r="1.75" fill="#4472c4"/></svg>
<div class="a tx" style="left:155.30px;top:404.20px;font-size:5.8px;color:#6a6a6a;-webkit-text-stroke:0">0</div>
<div class="a tx" style="left:152.08px;top:366.91px;font-size:5.8px;color:#6a6a6a;-webkit-text-stroke:0">20</div>
<div class="a tx" style="left:152.08px;top:329.63px;font-size:5.8px;color:#6a6a6a;-webkit-text-stroke:0">40</div>
<div class="a tx" style="left:152.08px;top:292.34px;font-size:5.8px;color:#6a6a6a;-webkit-text-stroke:0">60</div>
<div class="a tx" style="left:152.08px;top:255.06px;font-size:5.8px;color:#6a6a6a;-webkit-text-stroke:0">80</div>
<div class="a tx" style="left:148.85px;top:217.77px;font-size:5.8px;color:#6a6a6a;-webkit-text-stroke:0">100</div>
<div class="a tx" style="left:148.85px;top:180.49px;font-size:5.8px;color:#6a6a6a;-webkit-text-stroke:0">120</div>
<div class="a tx" style="left:148.85px;top:143.20px;font-size:5.8px;color:#6a6a6a;-webkit-text-stroke:0">140</div>
<div class="a tx" style="left:162.43px;top:411.50px;font-size:5.3px;color:#6a6a6a;-webkit-text-stroke:0">0</div>
<div class="a tx" style="left:234.93px;top:411.50px;font-size:5.3px;color:#6a6a6a;-webkit-text-stroke:0">2</div>
<div class="a tx" style="left:307.44px;top:411.50px;font-size:5.3px;color:#6a6a6a;-webkit-text-stroke:0">4</div>
<div class="a tx" style="left:379.91px;top:411.50px;font-size:5.3px;color:#6a6a6a;-webkit-text-stroke:0">6</div>
<div class="a tx" style="left:452.43px;top:411.50px;font-size:5.3px;color:#6a6a6a;-webkit-text-stroke:0">8</div>
<div class="a tx" style="left:523.35px;top:411.50px;font-size:5.3px;color:#6a6a6a;-webkit-text-stroke:0">10</div>
<div class="a tx" style="left:595.88px;top:411.50px;font-size:5.3px;color:#6a6a6a;-webkit-text-stroke:0">12</div>
<svg class="a" style="left:758px;top:120.6px;" width="7" height="6" viewBox="0 0 7 6"><path d="M1 4.9 L3.6 1.6 L6.2 4.9 Z" fill="#5a5a5a"/></svg>
<div class="a" style="left:759px;top:140px;width:5px;height:248.7px;background:#6b6b6b;border-radius:2.5px"></div>
<svg class="a" style="left:758px;top:415px;" width="7" height="6" viewBox="0 0 7 6"><path d="M1 1.1 L3.6 4.4 L6.2 1.1 Z" fill="#5a5a5a"/></svg>
<div class="a" style="left:1px;top:422.3px;width:766px;height:14.5px;background:#f3f3f3"></div>
<div class="a" style="left:1px;top:422.2px;width:766px;height:1px;background:#dcdcdc"></div>
<div class="a" style="left:1px;top:436.4px;width:766px;height:0.6px;background:#e2e6ec"></div>
<div class="a" style="left:1px;top:422.8px;width:7.8px;height:14.8px;background:#e1e3e6"></div>
<svg class="a" style="left:14.5px;top:428px;" width="4" height="5" viewBox="0 0 4 5"><path d="M3.2 0.4 L0.6 2.1 L3.2 3.8 Z" fill="#107c41" stroke="#107c41" stroke-width="0.3"/></svg>
<svg class="a" style="left:30.5px;top:428px;" width="4" height="5" viewBox="0 0 4 5"><path d="M0.6 0.4 L3.2 2.1 L0.6 3.8 Z" fill="#107c41" stroke="#107c41" stroke-width="0.3"/></svg>
<div class="a tx" style="left:43.47px;top:430.00px;font-size:7px;color:#107c41;-webkit-text-stroke:0.25px currentColor;transform:scaleX(1.2950);">...</div>
<div class="a" style="left:52.9px;top:423.9px;width:3px;height:11.6px;background:linear-gradient(90deg,#fbfbfb 0,#fbfbfb 33%,#cdcdcd 33%,#cdcdcd 66%,#fbfbfb 66%)"></div>
<div class="a tx" style="left:61.59px;top:430.10px;font-size:6.8px;color:#424242;">Saeulen 2</div>
<div class="a" style="left:98.19999999999999px;top:423.9px;width:3px;height:11.6px;background:linear-gradient(90deg,#fbfbfb 0,#fbfbfb 33%,#cdcdcd 33%,#cdcdcd 66%,#fbfbfb 66%)"></div>
<div class="a tx" style="left:106.19px;top:430.10px;font-size:6.8px;color:#424242;">Saeulen 3</div>
<div class="a" style="left:142.5px;top:423.9px;width:3px;height:11.6px;background:linear-gradient(90deg,#fbfbfb 0,#fbfbfb 33%,#cdcdcd 33%,#cdcdcd 66%,#fbfbfb 66%)"></div>
<div class="a tx" style="left:151.30px;top:430.10px;font-size:6.8px;color:#424242;transform:scaleX(0.9761);">Saeulen 4</div>
<div class="a" style="left:187.0px;top:423.9px;width:3px;height:11.6px;background:linear-gradient(90deg,#fbfbfb 0,#fbfbfb 33%,#cdcdcd 33%,#cdcdcd 66%,#fbfbfb 66%)"></div>
<div class="a tx" style="left:195.81px;top:430.10px;font-size:6.8px;color:#424242;transform:scaleX(1.0644);">Kreisdiagramm</div>
<div class="a" style="left:250.1px;top:423.9px;width:3px;height:11.6px;background:linear-gradient(90deg,#fbfbfb 0,#fbfbfb 33%,#cdcdcd 33%,#cdcdcd 66%,#fbfbfb 66%)"></div>
<div class="a tx" style="left:258.60px;top:430.10px;font-size:6.8px;color:#424242;transform:scaleX(0.9922);">Punkt</div>
<div class="a" style="left:282.4px;top:423.9px;width:3px;height:11.6px;background:linear-gradient(90deg,#fbfbfb 0,#fbfbfb 33%,#cdcdcd 33%,#cdcdcd 66%,#fbfbfb 66%)"></div>
<div class="a" style="left:284.2px;top:422.2px;width:51.4px;height:13.5px;background:#fff"></div>
<div class="a" style="left:283.8px;top:434.7px;width:51.8px;height:1.3px;background:#107c41"></div>
<div class="a tx" style="left:290.38px;top:430.00px;font-size:6.8px;color:#107c41;-webkit-text-stroke:0.25px currentColor;transform:scaleX(1.1094);">Diagramm1</div>
<div class="a" style="left:335px;top:423.9px;width:3px;height:11.6px;background:linear-gradient(90deg,#fbfbfb 0,#fbfbfb 33%,#cdcdcd 33%,#cdcdcd 66%,#fbfbfb 66%)"></div>
<div class="a tx" style="left:343.56px;top:430.10px;font-size:6.8px;color:#424242;transform:scaleX(1.0639);">Diagrammtypen</div>
<div class="a" style="left:401.1px;top:423.9px;width:3px;height:11.6px;background:linear-gradient(90deg,#fbfbfb 0,#fbfbfb 33%,#cdcdcd 33%,#cdcdcd 66%,#fbfbfb 66%)"></div>
<div class="a tx" style="left:409.66px;top:430.10px;font-size:6.8px;color:#424242;transform:scaleX(0.9040);">Tabe</div>
<div class="a" style="left:419px;top:423.5px;width:8px;height:13px;background:linear-gradient(90deg,rgba(243,243,243,0),#f3f3f3 80%)"></div>
<div class="a tx" style="left:427.59px;top:430.00px;font-size:7px;color:#107c41;-webkit-text-stroke:0.25px currentColor;transform:scaleX(1.2620);">...</div>
<svg class="a" style="left:440px;top:424.7px;" width="11" height="11" viewBox="0 0 11 11"><circle cx="5.3" cy="5.3" r="4.1" fill="none" stroke="#555" stroke-width="0.7"/><path d="M5.3 3.2 V7.4 M3.2 5.3 H7.4" stroke="#444" stroke-width="0.8"/></svg>
<div class="a" style="left:453.2px;top:422.9px;width:314px;height:13.8px;background:#e4e7eb"></div>
<div class="a" style="left:469px;top:425.2px;width:287px;height:8.6px;background:#f9f9f9;border-radius:4.3px"></div>
<svg class="a" style="left:460px;top:427.5px;" width="3" height="6" viewBox="0 0 3 6"><rect x="0.2" y="0.3" width="1.8" height="1.2" fill="#555"/><rect x="0.2" y="2.3" width="1.8" height="1.2" fill="#555"/><rect x="0.2" y="4.3" width="1.8" height="1.2" fill="#555"/></svg>
<svg class="a" style="left:471px;top:427.5px;" width="4" height="5" viewBox="0 0 4 5"><path d="M3.7 0.1 L0.1 2.2 L3.7 4.5 Z" fill="#5a5a5a"/></svg>
<div class="a" style="left:477.9px;top:427.3px;width:268.8px;height:4.5px;background:#6b6b6b;border-radius:2.3px"></div>
<svg class="a" style="left:750px;top:427.3px;" width="4" height="5" viewBox="0 0 4 5"><path d="M0.1 0.1 L3.5 2.3 L0.1 4.6 Z" fill="#555"/></svg>
<div class="a" style="left:1px;top:436.3px;width:766px;height:13px;background:#f3f4f5"></div>
<div class="a tx" style="left:4.21px;top:444.00px;font-size:6.3px;color:#333;transform:scaleX(0.9563);">Bereit</div>
<svg class="a" style="left:30.3px;top:440px;" width="8" height="7" viewBox="0 0 8 7"><rect x="0" y="0" width="8" height="6.9" rx="0.8" fill="#666"/><rect x="0.9" y="0.9" width="6.2" height="1.2" fill="#a8a8a8"/><rect x="0.9" y="2.8" width="2.4" height="3.2" fill="#8a8a8a"/><circle cx="5.2" cy="4.4" r="1.3" fill="none" stroke="#ddd" stroke-width="0.6"/></svg>
<svg class="a" style="left:47.6px;top:439.5px;" width="9" height="8.5" viewBox="0 0 9 8.5"><circle cx="3.8" cy="1.3" r="1" fill="none" stroke="#555" stroke-width="0.7"/><path d="M0.4 2.9 L3.8 3.5 L7.2 2.9 M3.8 3.5 V5.3 L1.6 7.8 M3.8 5.3 L5.3 7.2" fill="none" stroke="#555" stroke-width="0.75"/><path d="M6.3 5.6 L8.2 7.6 M8.2 5.6 L6.3 7.6" stroke="#555" stroke-width="0.6"/></svg>
<div class="a tx" style="left:57.48px;top:444.00px;font-size:6.3px;color:#333;">Barrierefreiheit: Untersuchen</div>
<svg class="a" style="left:608.2px;top:439.5px;" width="8" height="7.5" viewBox="0 0 8 7.5"><rect x="0.4" y="0.4" width="7.2" height="6.6" fill="none" stroke="#c4c4c4" stroke-width="0.7"/><path d="M0.4 2.1 H7.6 M0.4 3.7 H7.6 M0.4 5.3 H7.6 M3 0.4 V7" stroke="#c4c4c4" stroke-width="0.5"/></svg>
<svg class="a" style="left:630.2px;top:439.5px;" width="8" height="7.5" viewBox="0 0 8 7.5"><rect x="0.4" y="0.4" width="7.2" height="6.6" fill="none" stroke="#c4c4c4" stroke-width="0.7"/><rect x="0.4" y="0.4" width="1.6" height="6.6" fill="#dadada"/><rect x="6" y="0.4" width="1.6" height="6.6" fill="#dadada"/></svg>
<svg class="a" style="left:651.6px;top:439.5px;" width="8" height="7.5" viewBox="0 0 8 7.5"><rect x="0.4" y="0.4" width="7.2" height="6.6" fill="none" stroke="#c4c4c4" stroke-width="0.7"/><path d="M0.4 3.8 H4.5 V0.4" fill="none" stroke="#c4c4c4" stroke-width="0.6"/></svg>
<div class="a" style="left:669.2px;top:442.8px;width:4px;height:0.9px;background:#555"></div>
<div class="a" style="left:676.2px;top:443px;width:12px;height:0.8px;background:#8a8a8a"></div>
<svg class="a" style="left:0px;top:0px;" width="6" height="6" viewBox="0 0 6 6"><path d="M0 0 H6 A6 6 0 0 0 0 6 Z" fill="#fff"/><path d="M0.5 6 A5.5 5.5 0 0 1 6 0.5" fill="none" stroke="#7aa990" stroke-width="1"/></svg>
<svg class="a" style="left:762px;top:0px;" width="6" height="6" viewBox="0 0 6 6"><path d="M6 0 H0 A6 6 0 0 1 6 6 Z" fill="#fff"/><path d="M0 0.5 A5.5 5.5 0 0 1 5.5 6" fill="none" stroke="#7aa990" stroke-width="1"/></svg>
<div class="a" style="left:6px;top:0px;width:756px;height:1px;background:#7aa990"></div>
<div class="a" style="left:0px;top:6px;width:1px;height:444px;background:#7aa990"></div>
<div class="a" style="left:767px;top:6px;width:1px;height:444px;background:#7aa990"></div>
<div class="a" style="left:0px;top:449px;width:768px;height:1px;background:#7aa990"></div>
<div class="a" style="left:687.2px;top:432.8px;width:82px;height:18px;background:#2b2b2b;border-radius:4.5px 0 0 0;box-shadow:inset 0.6px 0.6px 0 #3c3c3c"></div>
<svg class="a" style="left:695.8px;top:441.5px;" width="9" height="8" viewBox="0 0 9 8"><path d="M0.6 0.4 H3.2 L4 1.6 H6.6 V7.2 H0.6 Z" fill="#e8b93c"/><path d="M0.6 1.6 H6.6 V7.2 H0.6 Z" fill="#f4cd57"/><ellipse cx="6.2" cy="6.3" rx="2.6" ry="1.5" fill="#2d86d9"/></svg>
<div class="a tx" style="left:708.19px;top:445.30px;font-size:6.8px;color:#dcdcdc;transform:scaleX(0.9645);">OneDrive</div>
</body></html>
